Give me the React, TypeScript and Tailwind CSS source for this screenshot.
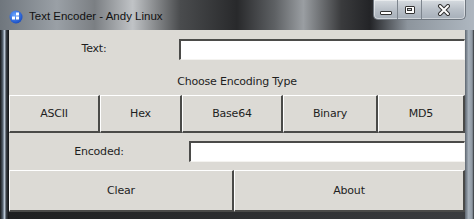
import React from "react";

const raised =
  "border-t border-l border-t-white border-l-white border-r-2 border-b-2 border-r-[#4a4a48] border-b-[#4a4a48]";
const sunken =
  "border-t-2 border-l-2 border-t-[#4b4b49] border-l-[#4b4b49] border-b border-r border-b-[#f4f3f0] border-r-[#f4f3f0] bg-white";

const AppIcon = () => (
  <svg width="14" height="14" viewBox="0 0 14 14">
    <defs>
      <radialGradient id="ig" cx="40%" cy="35%" r="70%">
        <stop offset="0%" stopColor="#6aa5ff" />
        <stop offset="100%" stopColor="#1348c0" />
      </radialGradient>
    </defs>
    <circle cx="7" cy="7" r="6.5" fill="url(#ig)" />
    <rect x="7" y="2.5" width="3" height="3" fill="#fff" />
    <rect x="3" y="6.5" width="3" height="3" fill="#fff" />
    <rect x="7" y="6.5" width="3" height="3" fill="#fff" />
  </svg>
);

const CaptionButtons = () => (
  <div className="absolute top-0 left-[373px] flex h-[20px] w-[93px] overflow-hidden rounded-b-[5px] border border-t-0 border-[#6f7780] bg-[linear-gradient(180deg,#d6dbe0_0%,#b9c0c8_50%,#a6afb9_100%)] shadow-[inset_0_0_0_1px_rgba(255,255,255,0.45)]">
    <div className="flex w-[24px] items-center justify-center border-r border-[#7d858e]">
      <div className="mt-[6px] h-[4px] w-[12px] rounded-[1px] border border-[#333] bg-white" />
    </div>
    <div className="flex w-[24px] items-center justify-center border-r border-[#7d858e]">
      <div className="flex h-[8px] w-[10px] items-center justify-center rounded-[1px] border border-[#333] bg-white">
        <div className="h-[3px] w-[5px] border border-[#333] bg-[#c8ced4]" />
      </div>
    </div>
    <div className="flex flex-1 items-center justify-center">
      <svg width="14" height="12" viewBox="0 0 14 12">
        <path d="M3 2 L11 10 M11 2 L3 10" stroke="#333" strokeWidth="4" strokeLinecap="round" />
        <path d="M3 2 L11 10 M11 2 L3 10" stroke="#fff" strokeWidth="2" strokeLinecap="round" />
      </svg>
    </div>
  </div>
);

const Btn = ({ label, w, h }: { label: string; w: string; h: string }) => (
  <div className={`${w} ${h} ${raised} flex items-center justify-center pt-[2px] text-[#1e1e1e]`}>{label}</div>
);

export default function App() {
  return (
    <div
      className="relative h-[219px] w-[474px] overflow-hidden bg-[linear-gradient(90deg,#2a2c2e_0%,#6e757c_1%,#1e1f20_2%,#3b3d40_100%)] text-[11px] tracking-[-0.2px]"
      style={{ fontFamily: '"DejaVu Sans", Verdana, sans-serif' }}
    >
      {/* title bar */}
      <div className="flex h-[30px] items-center gap-[6px] bg-[linear-gradient(90deg,#6f767d_0%,#9aa0a6_12%,#7b7f83_20%,#c0c3c6_28%,#4a4c4e_38%,#28292b_50%,#5e6164_58%,#9a9ea2_64%,#3a3b3d_72%,#232427_78%,#8d959d_86%,#aeb7c0_100%)] pl-[9px] pt-[3px]">
        <AppIcon />
        <span
          className="text-[11.5px] tracking-normal text-[#111]"
          style={{ fontFamily: '"Liberation Sans", Arial, sans-serif' }}
        >
          Text Encoder - Andy Linux
        </span>
      </div>
      <CaptionButtons />

      {/* frame sides */}
      <div className="flex h-[189px]">
        <div className="w-[9px] bg-[linear-gradient(90deg,#151617_0%,#55606c_30%,#b9c6d4_50%,#3a3f45_70%,#101112_100%)]" />
        <div className="flex h-[182px] w-[456px] flex-col bg-[#dcdad5]">
          <div className="flex h-[38px] items-center">
            <div className="flex w-[170px] justify-center pt-[1px] text-[#1e1e1e]">Text:</div>
            <div className={`h-[21px] w-[286px] ${sunken}`} />
          </div>
          <div className="flex h-[27px] items-center justify-center pt-[2px] text-[#1e1e1e]">Choose Encoding Type</div>
          <div className="flex">
            <Btn label="ASCII" w="w-[91px]" h="h-[38px]" />
            <Btn label="Hex" w="w-[82px]" h="h-[38px]" />
            <Btn label="Base64" w="w-[101px]" h="h-[38px]" />
            <Btn label="Binary" w="w-[95px]" h="h-[38px]" />
            <Btn label="MD5" w="w-[87px]" h="h-[38px]" />
          </div>
          <div className="flex h-[37px] items-center">
            <div className="flex w-[180px] justify-center pt-[1px] text-[#1e1e1e]">Encoded:</div>
            <div className={`h-[21px] w-[276px] ${sunken}`} />
          </div>
          <div className="flex">
            <Btn label="Clear" w="w-[225px]" h="h-[42px]" />
            <Btn label="About" w="w-[231px]" h="h-[42px]" />
          </div>
        </div>
        <div className="w-[9px] bg-[linear-gradient(90deg,#5d6670_0%,#a7b1bb_40%,#8e98a3_80%,#2b2e31_100%)]" />
      </div>
    </div>
  );
}
